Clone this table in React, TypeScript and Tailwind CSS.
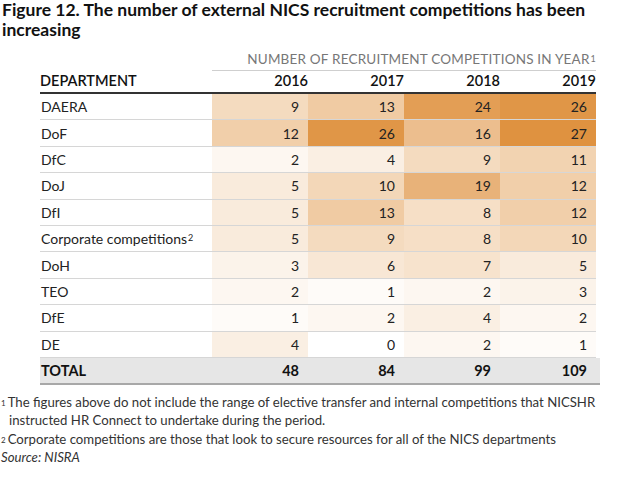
import React from "react";

const rows: [string, number, number, number, number][] = [
  ["DAERA", 9, 13, 24, 26],
  ["DoF", 12, 26, 16, 27],
  ["DfC", 2, 4, 9, 11],
  ["DoJ", 5, 10, 19, 12],
  ["DfI", 5, 13, 8, 12],
  ["Corporate competitions", 5, 9, 8, 10],
  ["DoH", 3, 6, 7, 5],
  ["TEO", 2, 1, 2, 3],
  ["DfE", 1, 2, 4, 2],
  ["DE", 4, 0, 2, 1],
];

function heat(v: number): string {
  const t = v / 27;
  const from = [255, 255, 255];
  const to = [223, 146, 64];
  const c = from.map((f, i) => Math.round(f + (to[i] - f) * t));
  return `rgb(${c[0]},${c[1]},${c[2]})`;
}

export default function App() {
  return (
    <div className="w-[620px] h-[477px] bg-white text-[#222] font-['Lato','Noto_Sans',sans-serif] overflow-hidden">
      <div className="pl-[2px] pt-0 text-[17.5px] font-bold leading-[20px] text-[#111]">
        Figure 12. The number of external NICS recruitment competitions has been
        <br />
        increasing
      </div>

      <div className="ml-[40px] w-[556px]">
        <div className="ml-[172px] mt-[11px] border-b border-[#cfcfcf] pb-[3px] text-right text-[13.5px] leading-[16px] tracking-[0.2px] text-[#777]">
          NUMBER OF RECRUITMENT COMPETITIONS IN YEAR
          <sup className="text-[9px] relative -top-[2px] ml-[1px]">1</sup>
        </div>

        <div className="grid grid-cols-[172px_96px_96px_96px_96px] items-end h-[23px] border-b-2 border-[#333] text-[14.5px] leading-[18px] text-[#111] pb-[2px] font-semibold">
          <div>DEPARTMENT</div>
          <div className="text-right">2016</div>
          <div className="text-right">2017</div>
          <div className="text-right">2018</div>
          <div className="text-right">2019</div>
        </div>

        {rows.map((r) => (
          <div
            key={r[0]}
            className="grid grid-cols-[172px_96px_96px_96px_96px] h-[26.4px] border-b-[1.5px] border-[#d6d6d6] text-[14px] text-[#222]"
          >
            <div className="flex items-center pl-[1px]">
              {r[0]}
              {r[0] === "Corporate competitions" && (
                <sup className="text-[9px] ml-[1px] relative -top-[1px]">2</sup>
              )}
            </div>
            {[r[1], r[2], r[3], r[4]].map((v, i) => (
              <div
                key={i}
                className="flex items-center justify-end pr-[9px]"
                style={{ backgroundColor: heat(v) }}
              >
                {v}
              </div>
            ))}
          </div>
        ))}

        <div className="grid grid-cols-[172px_96px_96px_96px_96px] h-[27px] bg-[#e6e6e6] border-b-2 border-[#a8a8a8] text-[14.5px] font-bold text-[#111] w-[560px]">
          <div className="flex items-center pl-[1px]">TOTAL</div>
          <div className="flex items-center justify-end pr-[9px]">48</div>
          <div className="flex items-center justify-end pr-[9px]">84</div>
          <div className="flex items-center justify-end pr-[9px]">99</div>
          <div className="flex items-center justify-end pr-[9px]">109</div>
        </div>
      </div>

      <div className="mt-[8px] pl-[1px] text-[13.2px] leading-[18.5px] text-[#333]">
        <div className="pl-[8px] -indent-[8px]">
          <sup className="text-[8px] relative -top-[1px] mr-[2px]">1</sup>
          The figures above do not include the range of elective transfer and internal competitions that NICSHR instructed HR Connect to undertake during the period.
        </div>
        <div>
          <sup className="text-[8px] relative -top-[1px] mr-[2px]">2</sup>
          Corporate competitions are those that look to secure resources for all of the NICS departments
        </div>
        <div className="italic">Source: NISRA</div>
      </div>
    </div>
  );
}
